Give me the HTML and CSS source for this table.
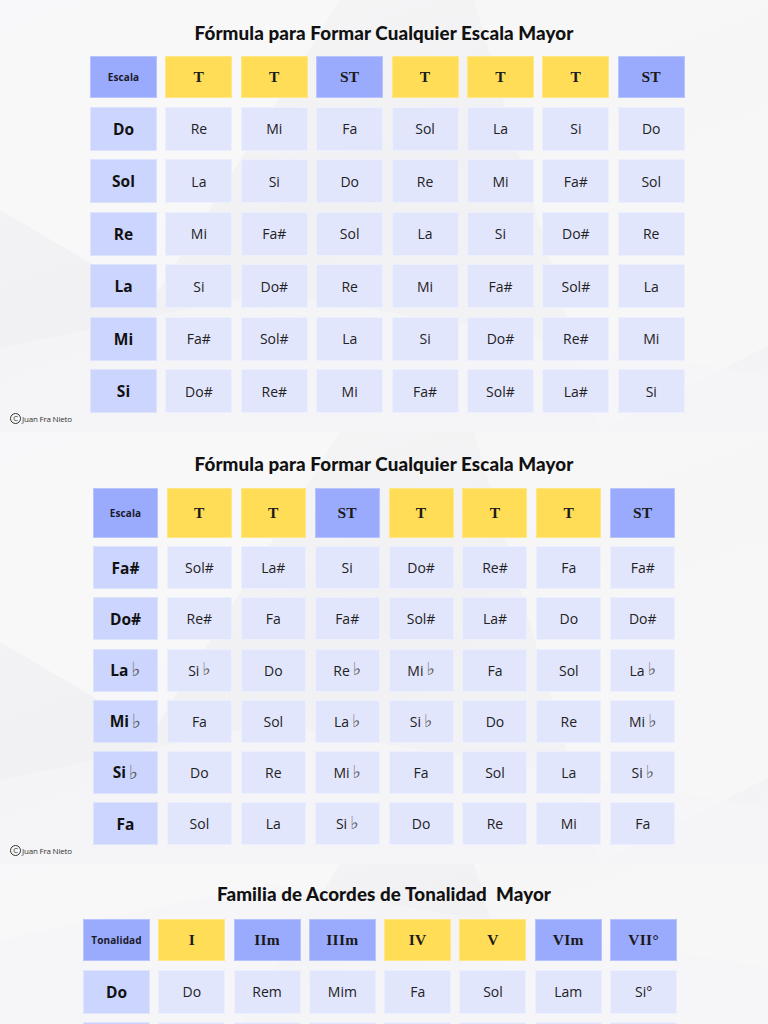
FILE: index.html
```html
<!DOCTYPE html>
<html lang="es">
<head>
<meta charset="utf-8">
<title>Escalas Mayores</title>
<link rel="stylesheet" href="styles.css">
</head>
<body>
<section class="panel panel-1">
  <div class="shape s1"></div><div class="shape s2"></div><div class="shape s3"></div>
  <h2 class="title">Fórmula para Formar Cualquier Escala Mayor</h2>
  <div class="grid grid-a">
    <div class="cell h-blue h-label">Escala</div>
    <div class="cell h-yellow h-step">T</div>
    <div class="cell h-yellow h-step">T</div>
    <div class="cell h-blue h-step">ST</div>
    <div class="cell h-yellow h-step">T</div>
    <div class="cell h-yellow h-step">T</div>
    <div class="cell h-yellow h-step">T</div>
    <div class="cell h-blue h-step">ST</div>

    <div class="cell key">Do</div><div class="cell">Re</div><div class="cell">Mi</div><div class="cell">Fa</div><div class="cell">Sol</div><div class="cell">La</div><div class="cell">Si</div><div class="cell">Do</div>
    <div class="cell key">Sol</div><div class="cell">La</div><div class="cell">Si</div><div class="cell">Do</div><div class="cell">Re</div><div class="cell">Mi</div><div class="cell">Fa#</div><div class="cell">Sol</div>
    <div class="cell key">Re</div><div class="cell">Mi</div><div class="cell">Fa#</div><div class="cell">Sol</div><div class="cell">La</div><div class="cell">Si</div><div class="cell">Do#</div><div class="cell">Re</div>
    <div class="cell key">La</div><div class="cell">Si</div><div class="cell">Do#</div><div class="cell">Re</div><div class="cell">Mi</div><div class="cell">Fa#</div><div class="cell">Sol#</div><div class="cell">La</div>
    <div class="cell key">Mi</div><div class="cell">Fa#</div><div class="cell">Sol#</div><div class="cell">La</div><div class="cell">Si</div><div class="cell">Do#</div><div class="cell">Re#</div><div class="cell">Mi</div>
    <div class="cell key">Si</div><div class="cell">Do#</div><div class="cell">Re#</div><div class="cell">Mi</div><div class="cell">Fa#</div><div class="cell">Sol#</div><div class="cell">La#</div><div class="cell">Si</div>
  </div>
  <p class="copy"><span class="copy-c">C</span>Juan Fra Nieto</p>
</section>

<section class="panel panel-2">
  <div class="shape s1"></div><div class="shape s2"></div><div class="shape s3"></div>
  <h2 class="title">Fórmula para Formar Cualquier Escala Mayor</h2>
  <div class="grid grid-b">
    <div class="cell h-blue h-label">Escala</div>
    <div class="cell h-yellow h-step">T</div>
    <div class="cell h-yellow h-step">T</div>
    <div class="cell h-blue h-step">ST</div>
    <div class="cell h-yellow h-step">T</div>
    <div class="cell h-yellow h-step">T</div>
    <div class="cell h-yellow h-step">T</div>
    <div class="cell h-blue h-step">ST</div>

    <div class="cell key">Fa#</div><div class="cell">Sol#</div><div class="cell">La#</div><div class="cell">Si</div><div class="cell">Do#</div><div class="cell">Re#</div><div class="cell">Fa</div><div class="cell">Fa#</div>
    <div class="cell key">Do#</div><div class="cell">Re#</div><div class="cell">Fa</div><div class="cell">Fa#</div><div class="cell">Sol#</div><div class="cell">La#</div><div class="cell">Do</div><div class="cell">Do#</div>
    <div class="cell key">La<span class="flat">♭</span></div><div class="cell">Si<span class="flat">♭</span></div><div class="cell">Do</div><div class="cell">Re<span class="flat">♭</span></div><div class="cell">Mi<span class="flat">♭</span></div><div class="cell">Fa</div><div class="cell">Sol</div><div class="cell">La<span class="flat">♭</span></div>
    <div class="cell key">Mi<span class="flat">♭</span></div><div class="cell">Fa</div><div class="cell">Sol</div><div class="cell">La<span class="flat">♭</span></div><div class="cell">Si<span class="flat">♭</span></div><div class="cell">Do</div><div class="cell">Re</div><div class="cell">Mi<span class="flat">♭</span></div>
    <div class="cell key">Si<span class="flat">♭</span></div><div class="cell">Do</div><div class="cell">Re</div><div class="cell">Mi<span class="flat">♭</span></div><div class="cell">Fa</div><div class="cell">Sol</div><div class="cell">La</div><div class="cell">Si<span class="flat">♭</span></div>
    <div class="cell key">Fa</div><div class="cell">Sol</div><div class="cell">La</div><div class="cell">Si<span class="flat">♭</span></div><div class="cell">Do</div><div class="cell">Re</div><div class="cell">Mi</div><div class="cell">Fa</div>
  </div>
  <p class="copy"><span class="copy-c">C</span>Juan Fra Nieto</p>
</section>

<section class="panel panel-3">
  <div class="shape s1"></div><div class="shape s2"></div><div class="shape s3"></div>
  <h2 class="title">Familia de Acordes de Tonalidad&nbsp; Mayor</h2>
  <div class="grid grid-c">
    <div class="cell h-blue h-label">Tonalidad</div>
    <div class="cell h-yellow h-step">I</div>
    <div class="cell h-blue h-step">IIm</div>
    <div class="cell h-blue h-step">IIIm</div>
    <div class="cell h-yellow h-step">IV</div>
    <div class="cell h-yellow h-step">V</div>
    <div class="cell h-blue h-step">VIm</div>
    <div class="cell h-blue h-step">VII°</div>

    <div class="cell key">Do</div><div class="cell">Do</div><div class="cell">Rem</div><div class="cell">Mim</div><div class="cell">Fa</div><div class="cell">Sol</div><div class="cell">Lam</div><div class="cell">Si°</div>
    <div class="cell key"></div><div class="cell"></div><div class="cell"></div><div class="cell"></div><div class="cell"></div><div class="cell"></div><div class="cell"></div><div class="cell"></div>
  </div>
</section>
</body>
</html>
```

FILE: styles.css
```css
* { box-sizing: border-box; }

html, body {
  margin: 0;
  padding: 0;
  background: #f3f3f5;
}

body {
  font-family: "Open Sans", "Noto Sans", sans-serif;
  color: #1c1c1c;
}

.panel {
  position: relative;
  height: 432px;
  overflow: hidden;
  background: linear-gradient(160deg, #f6f6f7 0%, #f1f1f3 45%, #f4f4f6 100%);
  display: flex;
  flex-direction: column;
}

.panel-3 { height: 160px; }

.shape {
  position: absolute;
  pointer-events: none;
}

.s1 {
  left: 0; top: 0; width: 340px; height: 300px;
  clip-path: polygon(0 0, 100% 0, 45% 100%, 0 70%);
  background: #f9f9fa;
  opacity: 0.8;
}

.s2 {
  right: 0; top: 0; width: 420px; height: 432px;
  clip-path: polygon(30% 0, 100% 0, 100% 80%, 60% 100%);
  background: #f7f7f8;
  opacity: 0.8;
}

.s3 {
  left: 0; bottom: 0; width: 768px; height: 140px;
  clip-path: polygon(0 40%, 35% 0, 100% 60%, 100% 100%, 0 100%);
  background: #f5f5f7;
  opacity: 0.8;
}

.title {
  position: relative;
  margin: 0;
  text-align: center;
  font-family: "Lato", "Open Sans", sans-serif;
  font-weight: 900;
  font-size: 18.8px;
  line-height: 22px;
  color: #111;
  letter-spacing: 0.1px;
}

.panel-1 .title { padding-top: 22px; }
.panel-2 .title { padding-top: 21px; }
.panel-3 .title { padding-top: 19px; }

.grid {
  position: relative;
  display: grid;
}

.grid-a {
  margin: 12px 0 0 90px;
  grid-template-columns: repeat(8, 67px);
  grid-template-rows: 42px repeat(6, 44px);
  column-gap: 8.4px;
  row-gap: 8.5px;
}

.grid-b {
  margin: 13px 0 0 93px;
  grid-template-columns: repeat(8, 65px);
  grid-template-rows: 50px repeat(6, 43px);
  column-gap: 8.9px;
  row-gap: 8.2px;
}

.grid-c {
  margin: 14px 0 0 83px;
  grid-template-columns: repeat(8, 67px);
  grid-template-rows: 42px repeat(2, 44px);
  column-gap: 8.3px;
  row-gap: 8.5px;
}

.cell {
  display: flex;
  align-items: center;
  justify-content: center;
  background: #e2e6fd;
  box-shadow: inset 0 0 0 1px rgba(255, 255, 255, 0.35);
  font-size: 14px;
  color: #222;
  white-space: nowrap;
}

.key {
  background: #ccd5fd;
  font-weight: 700;
  font-size: 15.5px;
  color: #111;
}

.h-blue { background: #9aabfe; box-shadow: inset 0 0 0 1px rgba(255,255,255,0.3); }
.h-yellow { background: #ffdd57; box-shadow: inset 0 0 0 1px rgba(255,255,255,0.3); }

.h-step {
  font-family: "Liberation Serif", "DejaVu Serif", serif;
  font-weight: 700;
  font-size: 15.5px;
  color: #1a1a1a;
  letter-spacing: 0.3px;
}

.h-label {
  font-family: "Liberation Sans Narrow", "Open Sans", sans-serif;
  font-weight: 700;
  font-size: 10px;
  color: #1a1a2a;
  letter-spacing: 0.1px;
}

.flat {
  font-family: "DejaVu Sans", sans-serif;
  font-weight: 400;
  color: #5a5a5a;
  font-size: 1.25em;
  margin-left: 3px;
  line-height: 1;
}

.copy {
  position: relative;
  margin: 0;
  padding-left: 10px;
  display: flex;
  align-items: center;
  gap: 1px;
  font-family: "Open Sans", sans-serif;
  font-size: 8px;
  color: #333;
  letter-spacing: -0.2px;
}

.copy-c {
  display: inline-flex;
  align-items: center;
  justify-content: center;
  width: 11px;
  height: 11px;
  border: 1px solid #333;
  border-radius: 50%;
  font-size: 7.5px;
  line-height: 1;
}
```
